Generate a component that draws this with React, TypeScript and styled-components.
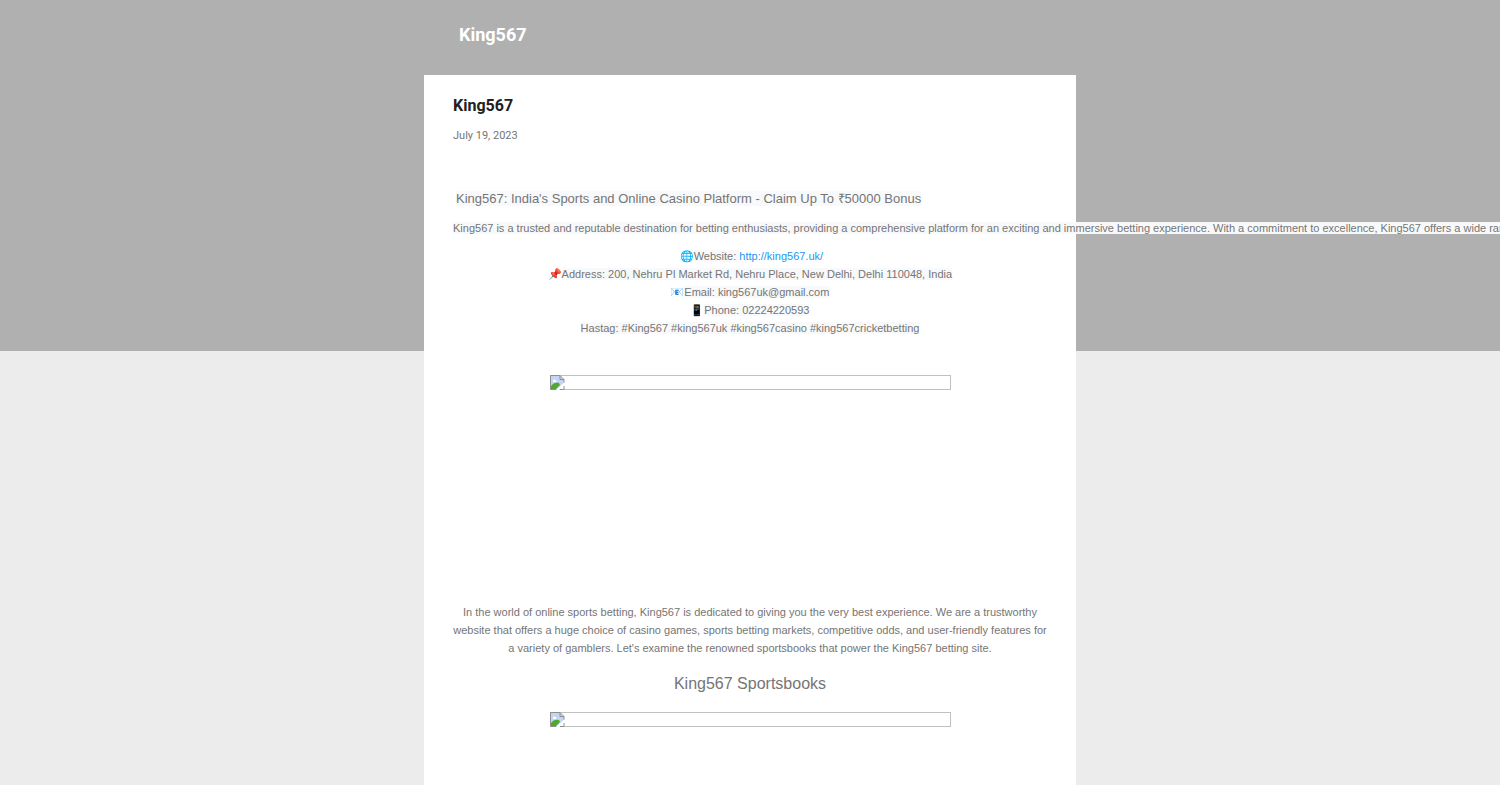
import React from "react";
import styled, { createGlobalStyle } from "styled-components";

const GlobalStyle = createGlobalStyle`
  *, *::before, *::after { box-sizing: border-box; }
  body {
    margin: 0;
    background: #ececec;
    color: #757575;
    font-family: "Liberation Sans", Arial, "Noto Color Emoji", sans-serif;
    font-size: 11px;
    line-height: 18px;
  }
  h1, h2, h3, p { margin: 0; font-weight: 400; }
`;

const Page = styled.div`
  display: flex;
  flex-direction: column;
  align-items: center;
  min-height: 100vh;
  overflow: hidden;
  background: linear-gradient(#b0b0b0, #b0b0b0) top / 100% 351px no-repeat #ececec;
`;

const Column = styled.div`
  display: flex;
  flex: 1;
  flex-direction: column;
  width: 100%;
  max-width: 652px;
`;

const Header = styled.header`
  padding: 23px 35px 28px;
`;

const BlogName = styled.h1`
  && { font-weight: 700; }
  font-family: Roboto, sans-serif;
  font-size: 18px;
  line-height: 24px;
  color: #fff;
`;

const Post = styled.article`
  flex: 1;
  padding: 20px 29px;
  background: #fff;
`;

const PostTitle = styled.h2`
  && { font-weight: 700; }
  font-family: Roboto, sans-serif;
  font-size: 16px;
  line-height: 22px;
  color: #212121;
`;

const PostDate = styled.time`
  display: block;
  margin-top: 10px;
  font-family: Roboto, sans-serif;
`;

const Lead = styled.h3`
  && { margin: 45px 0 11px; }
  padding-left: 3px;
  font-size: 13px;
  line-height: 18px;
`;

const Mark = styled.span`
  background: #f8f9fa;
`;

const Intro = styled.p`
  white-space: nowrap;
`;

const Contact = styled.address`
  margin: 10px 0 38px;
  font-style: normal;
  text-align: center;
`;

const Link = styled.a`
  color: #2196f3;
  text-decoration: none;
`;

const Figure = styled.div<{ $space?: number }>`
  display: flex;
  justify-content: center;
  padding-bottom: ${({ $space = 0 }) => $space}px;
`;

const MissingImage = styled.div`
  width: 401px;
  max-width: 100%;
  height: 15px;
  border: 1px solid #c0c0c0;

  svg {
    display: block;
    margin: -1px;
  }
`;

const Paragraph = styled.p`
  text-align: center;
`;

const SectionTitle = styled.h3`
  && { margin: 16px 0 17px; }
  font-size: 16px;
  line-height: 22px;
  text-align: center;
`;

function BrokenImage({ label }: { label: string }) {
  return (
    <MissingImage role="img" aria-label={label}>
      <svg width="15" height="15" viewBox="0 0 15 15" aria-hidden="true">
        <path d="M1 1h9l4 4v3l-6 6H1z" fill="#c3d5f3" />
        <path d="M1 14v-3c2-3 5-4 8-3l1 2-4 4z" fill="#4fa82f" />
        <path d="M3 6c0-1.500 2-2 2.500-.7 1.200 0 1.500 1.500.3 1.700H3.500C3.100 7 3 6.500 3 6z" fill="#fff" />
        <path d="M.5 14.500V.5h9.500l4 4V8M.5 14.500H6M10 .5v4h4M10 14.500h4V11" fill="none" stroke="#8f8f8f" />
        <path d="M6 15l8.500-8v3L9 15z" fill="#fff" />
      </svg>
    </MissingImage>
  );
}

export default function App() {
  return (
    <Page>
      <GlobalStyle />
      <Column>
        <Header>
          <BlogName>King567</BlogName>
        </Header>
        <Post>
          <PostTitle>King567</PostTitle>
          <PostDate dateTime="2023-07-19">July 19, 2023</PostDate>
          <Lead>
            <Mark>King567: India's Sports and Online Casino Platform - Claim Up To ₹50000 Bonus</Mark>
          </Lead>
          <Intro>
            <Mark>
              King567 is a trusted and reputable destination for betting enthusiasts, providing a comprehensive platform for an exciting and immersive betting experience. With a commitment to excellence, King567 offers a wide range
            </Mark>
          </Intro>
          <Contact>
            <div>&nbsp;🌐<Mark>Website: </Mark><Link href="http://king567.uk/">http://king567.uk/</Link></div>
            <div>📌<Mark>Address: 200, Nehru Pl Market Rd, Nehru Place, New Delhi, Delhi 110048, India</Mark></div>
            <div>📧<Mark>Email: king567uk@gmail.com</Mark></div>
            <div>📱<Mark>Phone: 02224220593</Mark></div>
            <div><Mark>Hastag: #King567 #king567uk #king567casino #king567cricketbetting</Mark></div>
          </Contact>
          <Figure $space={213}>
            <BrokenImage label="King567" />
          </Figure>
          <Paragraph>
            In the world of online sports betting, King567 is dedicated to giving you the very best experience. We are a trustworthy website that offers a huge choice of casino games, sports betting markets, competitive odds, and user-friendly features for a variety of gamblers. Let's examine the renowned sportsbooks that power the King567 betting site.
          </Paragraph>
          <SectionTitle>King567 Sportsbooks</SectionTitle>
          <Figure>
            <BrokenImage label="King567 Sportsbooks" />
          </Figure>
        </Post>
      </Column>
    </Page>
  );
}
